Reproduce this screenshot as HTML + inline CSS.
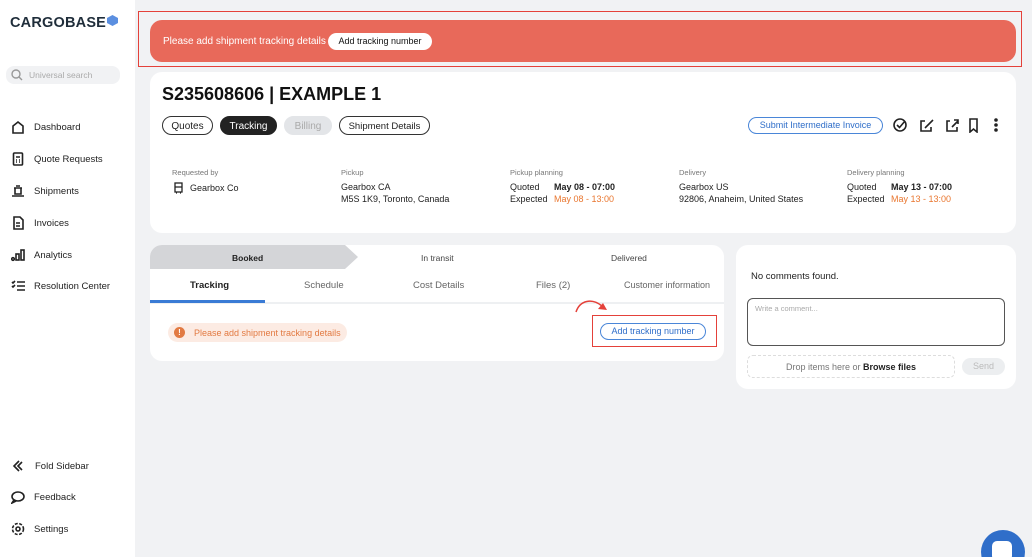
<!DOCTYPE html><html><head><style>
*{box-sizing:border-box;margin:0;padding:0}
html,body{width:1032px;height:557px;overflow:hidden}
body{background:#f1f2f4;font-family:"Liberation Sans",sans-serif;color:#222;position:relative;font-size:10px}
.a{position:absolute;white-space:nowrap}
.side{left:0;top:0;width:135px;height:557px;background:#fff}
.nav{left:11px;font-size:9.5px;color:#222;display:flex;align-items:center}
.nav svg{width:14px;height:14px;margin-right:9px;fill:none;stroke:#222;stroke-width:1.6}
.card{background:#fff;border-radius:12px}
.pill{border:1.3px solid #333;border-radius:12px;height:19px;line-height:18px;padding-top:1px;font-size:10px;display:inline-block;text-align:center}
.lbl{font-size:7.5px;color:#777}
.v{font-size:9px;color:#222}
.or{color:#e9762f}
</style></head><body>
<div class="a side"></div>
<div class="a" style="left:10px;top:15px;font-size:14.5px;font-weight:bold;color:#1f2d3a;letter-spacing:0.2px">CARGOBASE</div>
<svg class="a" style="left:107px;top:15px" width="11" height="11"><polygon points="5.5,0 11,3 11,8 5.5,11 0,8 0,3" fill="#5b8fe0"/></svg>
<div class="a" style="left:6px;top:66px;width:114px;height:18px;border-radius:8px;background:#f1f2f4;color:#aaa;font-size:8.5px;line-height:18px;padding-left:23px">Universal search</div>
<svg class="a" style="left:11px;top:69px" width="12" height="12"><circle cx="5" cy="5" r="4" fill="none" stroke="#999" stroke-width="1.4"/><line x1="8" y1="8" x2="11" y2="11" stroke="#999" stroke-width="1.4"/></svg>
<div class="a nav" style="top:120px"><svg viewBox="0 0 14 14"><path d="M2 13V6l5-4 5 4v7z"/></svg>Dashboard</div>
<div class="a nav" style="top:152px"><svg viewBox="0 0 14 14"><rect x="2.5" y="1" width="9" height="12" rx="1"/><path d="M5 5h4M5 8h1M8 8h1M5 10h1M8 10h1"/></svg>Quote Requests</div>
<div class="a nav" style="top:184px"><svg viewBox="0 0 14 14"><path d="M3 4h8M4 4v6h6V4M1 12h12M5 2h4"/></svg>Shipments</div>
<div class="a nav" style="top:216px"><svg viewBox="0 0 14 14"><path d="M3 1h6l3 3v9H3z M5 7h4M5 10h4"/></svg>Invoices</div>
<div class="a nav" style="top:248px"><svg viewBox="0 0 14 14"><circle cx="2" cy="11" r="1.3"/><rect x="5" y="6" width="3" height="6"/><rect x="10" y="2" width="3" height="10"/></svg>Analytics</div>
<div class="a nav" style="top:279px"><svg viewBox="0 0 14 14"><path d="M6 3h8M6 7h8M6 11h8M1 3l1 1 2-2M1 7l1 1 2-2"/></svg>Resolution Center</div>
<div class="a nav" style="top:459px"><svg viewBox="0 0 14 14"><path d="M8 2L3 7l5 5M11 3L7 7l4 4"/></svg><span style="margin-left:1px">Fold Sidebar</span></div>
<div class="a nav" style="top:490px"><svg viewBox="0 0 14 14"><ellipse cx="7" cy="6.5" rx="6" ry="4.5"/><path d="M3 10l-2 3 4-2"/></svg>Feedback</div>
<div class="a nav" style="top:522px"><svg viewBox="0 0 14 14"><circle cx="7" cy="7" r="2"/><circle cx="7" cy="7" r="5.5" stroke-dasharray="3 1.5"/></svg>Settings</div>

<div class="a" style="left:138px;top:11px;width:884px;height:56px;border:1.5px solid #e4413a"></div>
<div class="a" style="left:150px;top:20px;width:866px;height:42px;background:#e8695a;border-radius:12px"></div>
<div class="a" style="left:163px;top:36px;color:#fff;font-size:10px">Please add shipment tracking details</div>
<div class="a" style="left:328px;top:33px;width:104px;height:17px;background:#fff;border-radius:9px;font-size:9px;text-align:center;line-height:17px;color:#111">Add tracking number</div>
<svg class="a" style="left:415px;top:72px" width="36" height="28"><path d="M32 24C22 24 12 18 7 7" fill="none" stroke="#e4413a" stroke-width="1.5"/><path d="M4 3l2 9 5-5z" fill="#e4413a"/></svg>

<div class="a card" style="left:150px;top:72px;width:866px;height:161px"></div>
<div class="a" style="left:162px;top:84px;font-size:18px;font-weight:bold;color:#111">S235608606 | EXAMPLE 1</div>
<div class="a pill" style="left:162px;top:116px;width:51px">Quotes</div>
<div class="a pill" style="left:220px;top:116px;width:57px;background:#222;color:#fff;border-color:#222">Tracking</div>
<div class="a pill" style="left:284px;top:116px;width:48px;background:#e3e5e8;color:#aaa;border-color:#e3e5e8">Billing</div>
<div class="a pill" style="left:339px;top:116px;width:91px;font-size:9.5px">Shipment Details</div>
<div class="a" style="left:748px;top:117px;width:135px;height:17px;border:1.2px solid #4a86d8;border-radius:9px;color:#2f6ec9;font-size:9px;text-align:center;line-height:15px">Submit Intermediate Invoice</div>
<svg class="a" style="left:892px;top:117px" width="110" height="16" fill="none" stroke="#222" stroke-width="1.6"><circle cx="8" cy="8" r="6"/><path d="M5 8l2.5 2.5L13 4"/><path d="M33 4h-4v10h10v-4M33 11l8-8"/><path d="M58 4h-3v10h10v-4M60 10l6-6M62 3h4v4"/><path d="M78 2h7v13l-3.5-3-3.5 3z"/><circle cx="104" cy="3" r="1" fill="#222"/><circle cx="104" cy="8" r="1" fill="#222"/><circle cx="104" cy="13" r="1" fill="#222"/></svg>

<div class="a lbl" style="left:172px;top:168px">Requested by</div>
<svg class="a" style="left:174px;top:182px" width="9" height="12"><rect x="1" y="1" width="7" height="9" fill="none" stroke="#222" stroke-width="1.3"/><path d="M1 5h7M2 11h1M6 11h1" stroke="#222" stroke-width="1.3"/></svg>
<div class="a v" style="left:190px;top:183px">Gearbox Co</div>
<div class="a lbl" style="left:341px;top:168px">Pickup</div>
<div class="a v" style="left:341px;top:181px;line-height:12px">Gearbox CA<br>M5S 1K9, Toronto, Canada</div>
<div class="a lbl" style="left:510px;top:168px">Pickup planning</div>
<div class="a v" style="left:510px;top:181px;line-height:12px">Quoted<br>Expected</div>
<div class="a v" style="left:554px;top:181px;line-height:12px;font-weight:bold">May 08 - 07:00<br><span class="or" style="font-weight:normal">May 08 - 13:00</span></div>
<div class="a lbl" style="left:679px;top:168px">Delivery</div>
<div class="a v" style="left:679px;top:181px;line-height:12px">Gearbox US<br>92806, Anaheim, United States</div>
<div class="a lbl" style="left:847px;top:168px">Delivery planning</div>
<div class="a v" style="left:847px;top:181px;line-height:12px">Quoted<br>Expected</div>
<div class="a v" style="left:891px;top:181px;line-height:12px;font-weight:bold">May 13 - 07:00<br><span class="or" style="font-weight:normal">May 13 - 13:00</span></div>

<div class="a card" style="left:150px;top:245px;width:574px;height:116px;overflow:hidden">
<svg class="a" style="left:0;top:0" width="574" height="24"><polygon points="0,0 195,0 208,12 195,24 0,24" fill="#d4d5d8"/></svg>
<div class="a" style="left:0;top:24px;width:574px;height:35px;background:#fff;border-radius:10px 10px 0 0;border-bottom:2px solid #eef0f2"></div>
</div>
<div class="a" style="left:232px;top:253px;font-size:8.5px;font-weight:bold">Booked</div>
<div class="a" style="left:421px;top:253px;font-size:8.5px;color:#444">In transit</div>
<div class="a" style="left:611px;top:253px;font-size:8.5px;color:#444">Delivered</div>
<div class="a" style="left:190px;top:280px;font-size:9.5px;font-weight:bold">Tracking</div>
<div class="a" style="left:150px;top:300px;width:115px;height:3px;background:#3a7bd5"></div>
<div class="a" style="left:304px;top:280px;font-size:9.5px;color:#666">Schedule</div>
<div class="a" style="left:413px;top:280px;font-size:9.5px;color:#666">Cost Details</div>
<div class="a" style="left:536px;top:280px;font-size:9.5px;color:#666">Files (2)</div>
<div class="a" style="left:624px;top:280px;font-size:9px;color:#666">Customer information</div>
<div class="a" style="left:168px;top:323px;width:179px;height:19px;background:#fcebe3;border-radius:10px"></div>
<div class="a" style="left:174px;top:327px;width:11px;height:11px;border-radius:50%;background:#e27a42;color:#fff;font-size:8px;font-weight:bold;text-align:center;line-height:11px">!</div>
<div class="a" style="left:194px;top:328px;font-size:9px;color:#e27a42">Please add shipment tracking details</div>
<div class="a" style="left:592px;top:315px;width:125px;height:32px;border:1.5px solid #e4413a"></div>
<div class="a" style="left:600px;top:323px;width:106px;height:17px;border:1.2px solid #4a86d8;border-radius:9px;color:#2f6ec9;font-size:9px;text-align:center;line-height:15px">Add tracking number</div>
<svg class="a" style="left:574px;top:296px" width="36" height="18"><path d="M2 16C6 4 18 2 28 10" fill="none" stroke="#e4413a" stroke-width="1.5"/><path d="M33 14l-9-1 5-6z" fill="#e4413a"/></svg>

<div class="a card" style="left:736px;top:245px;width:280px;height:144px"></div>
<div class="a" style="left:751px;top:271px;font-size:9.5px">No comments found.</div>
<div class="a" style="left:747px;top:298px;width:258px;height:48px;border:1.3px solid #555;border-radius:6px;font-size:7.5px;color:#aaa;padding:5px 7px">Write a comment...</div>
<div class="a" style="left:747px;top:355px;width:208px;height:23px;border:1px dashed #ddd;border-radius:6px;font-size:9px;color:#777;text-align:center;line-height:22px">Drop items here or <b style="color:#222">Browse files</b></div>
<div class="a" style="left:962px;top:358px;width:43px;height:17px;background:#eceef0;border-radius:9px;font-size:9px;color:#bbb;text-align:center;line-height:17px">Send</div>
<div class="a" style="left:981px;top:530px;width:44px;height:44px;border-radius:50%;background:#2f6ec9"></div>
<div class="a" style="left:992px;top:541px;width:20px;height:20px;border-radius:5px;background:#fff"></div>
</body></html>
